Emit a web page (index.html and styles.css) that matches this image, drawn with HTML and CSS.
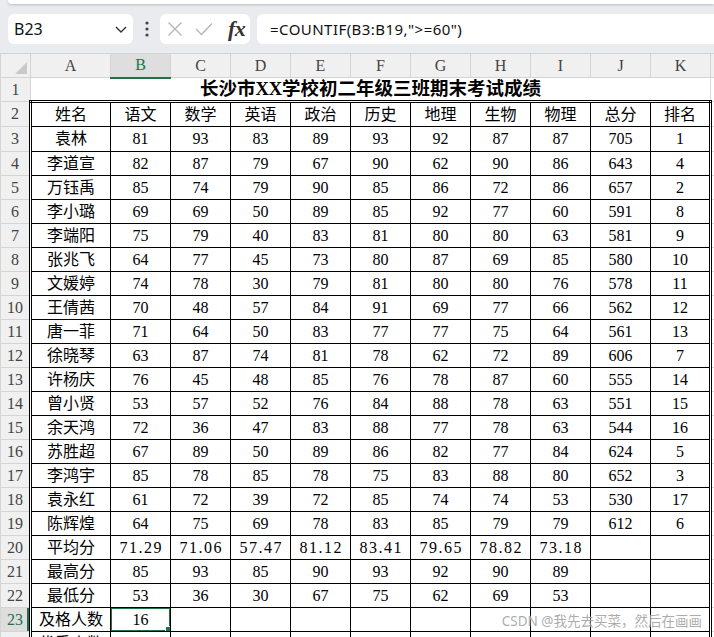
FILE: index.html
```html
<!DOCTYPE html>
<html lang="zh-CN">
<head>
<meta charset="utf-8">
<title>成绩表</title>
<link rel="stylesheet" href="styles.css">
</head>
<body>
<div class="app">
  <div class="ribbon"></div>
  <div class="fbar">
    <div class="namebox">
      <span>B23</span>
      <svg class="chev" width="12" height="7" viewBox="0 0 12 7"><polyline points="1,1 6,6 11,1" fill="none" stroke="#333" stroke-width="1.4"/></svg>
    </div>
    <div class="dots">
      <svg width="4" height="16" viewBox="0 0 4 16"><circle cx="2" cy="2" r="1.6" fill="#444"/><circle cx="2" cy="8" r="1.6" fill="#444"/><circle cx="2" cy="14" r="1.6" fill="#444"/></svg>
    </div>
    <div class="fxbox">
      <svg width="16" height="16" viewBox="0 0 16 16"><path d="M1.5 1.5 L14.5 14.5 M14.5 1.5 L1.5 14.5" stroke="#b4b4b4" stroke-width="1.3" fill="none"/></svg>
      <svg class="check" width="18" height="14" viewBox="0 0 18 14"><polyline points="1,7 6.5,12.5 17,1.5" fill="none" stroke="#b4b4b4" stroke-width="1.3"/></svg>
      <span class="fx">fx</span>
    </div>
    <div class="formula">=COUNTIF(B3:B19,"&gt;=60")</div>
  </div>
  <div class="sheet">
    <table class="grid">
      <colgroup>
        <col class="c-rh"><col class="c-a">
        <col class="c-n"><col class="c-n"><col class="c-n"><col class="c-n"><col class="c-n">
        <col class="c-n"><col class="c-n"><col class="c-n"><col class="c-n"><col class="c-n">
        <col class="c-x">
      </colgroup>
      <tr class="hdr">
        <th class="corner"><svg width="12" height="12" viewBox="0 0 12 12"><polygon points="12,0 12,12 0,12" fill="#c9c9c9"/></svg></th>
        <th>A</th><th class="hsel">B</th><th>C</th><th>D</th><th>E</th><th>F</th><th>G</th><th>H</th><th>I</th><th>J</th><th>K</th><th></th>
      </tr>
      <tr class="r">
        <td class="rh">1</td>
        <td class="title" colspan="11">长沙市XX学校初二年级三班期末考试成绩</td>
        <td class="gc"></td>
      </tr>
      <tr class="r r2 data top">
        <td class="rh">2</td>
        <td>姓名</td><td>语文</td><td>数学</td><td>英语</td><td>政治</td><td>历史</td><td>地理</td><td>生物</td><td>物理</td><td>总分</td><td>排名</td><td class="gc"></td>
      </tr>
      <tr class="r r2 data">
        <td class="rh">3</td>
        <td>袁林</td><td>81</td><td>93</td><td>83</td><td>89</td><td>93</td><td>92</td><td>87</td><td>87</td><td>705</td><td>1</td><td class="gc"></td>
      </tr>
      <tr class="r data">
        <td class="rh">4</td>
        <td>李道宣</td><td>82</td><td>87</td><td>79</td><td>67</td><td>90</td><td>62</td><td>90</td><td>86</td><td>643</td><td>4</td><td class="gc"></td>
      </tr>
      <tr class="r data">
        <td class="rh">5</td>
        <td>万钰禹</td><td>85</td><td>74</td><td>79</td><td>90</td><td>85</td><td>86</td><td>72</td><td>86</td><td>657</td><td>2</td><td class="gc"></td>
      </tr>
      <tr class="r data">
        <td class="rh">6</td>
        <td>李小璐</td><td>69</td><td>69</td><td>50</td><td>89</td><td>85</td><td>92</td><td>77</td><td>60</td><td>591</td><td>8</td><td class="gc"></td>
      </tr>
      <tr class="r data">
        <td class="rh">7</td>
        <td>李端阳</td><td>75</td><td>79</td><td>40</td><td>83</td><td>81</td><td>80</td><td>80</td><td>63</td><td>581</td><td>9</td><td class="gc"></td>
      </tr>
      <tr class="r data">
        <td class="rh">8</td>
        <td>张兆飞</td><td>64</td><td>77</td><td>45</td><td>73</td><td>80</td><td>87</td><td>69</td><td>85</td><td>580</td><td>10</td><td class="gc"></td>
      </tr>
      <tr class="r data">
        <td class="rh">9</td>
        <td>文媛婷</td><td>74</td><td>78</td><td>30</td><td>79</td><td>81</td><td>80</td><td>80</td><td>76</td><td>578</td><td>11</td><td class="gc"></td>
      </tr>
      <tr class="r data">
        <td class="rh">10</td>
        <td>王倩茜</td><td>70</td><td>48</td><td>57</td><td>84</td><td>91</td><td>69</td><td>77</td><td>66</td><td>562</td><td>12</td><td class="gc"></td>
      </tr>
      <tr class="r data">
        <td class="rh">11</td>
        <td>唐一菲</td><td>71</td><td>64</td><td>50</td><td>83</td><td>77</td><td>77</td><td>75</td><td>64</td><td>561</td><td>13</td><td class="gc"></td>
      </tr>
      <tr class="r data">
        <td class="rh">12</td>
        <td>徐晓琴</td><td>63</td><td>87</td><td>74</td><td>81</td><td>78</td><td>62</td><td>72</td><td>89</td><td>606</td><td>7</td><td class="gc"></td>
      </tr>
      <tr class="r data">
        <td class="rh">13</td>
        <td>许杨庆</td><td>76</td><td>45</td><td>48</td><td>85</td><td>76</td><td>78</td><td>87</td><td>60</td><td>555</td><td>14</td><td class="gc"></td>
      </tr>
      <tr class="r data">
        <td class="rh">14</td>
        <td>曾小贤</td><td>53</td><td>57</td><td>52</td><td>76</td><td>84</td><td>88</td><td>78</td><td>63</td><td>551</td><td>15</td><td class="gc"></td>
      </tr>
      <tr class="r data">
        <td class="rh">15</td>
        <td>余天鸿</td><td>72</td><td>36</td><td>47</td><td>83</td><td>88</td><td>77</td><td>78</td><td>63</td><td>544</td><td>16</td><td class="gc"></td>
      </tr>
      <tr class="r data">
        <td class="rh">16</td>
        <td>苏胜超</td><td>67</td><td>89</td><td>50</td><td>89</td><td>86</td><td>82</td><td>77</td><td>84</td><td>624</td><td>5</td><td class="gc"></td>
      </tr>
      <tr class="r data">
        <td class="rh">17</td>
        <td>李鸿宇</td><td>85</td><td>78</td><td>85</td><td>78</td><td>75</td><td>83</td><td>88</td><td>80</td><td>652</td><td>3</td><td class="gc"></td>
      </tr>
      <tr class="r data">
        <td class="rh">18</td>
        <td>袁永红</td><td>61</td><td>72</td><td>39</td><td>72</td><td>85</td><td>74</td><td>74</td><td>53</td><td>530</td><td>17</td><td class="gc"></td>
      </tr>
      <tr class="r data">
        <td class="rh">19</td>
        <td>陈辉煌</td><td>64</td><td>75</td><td>69</td><td>78</td><td>83</td><td>85</td><td>79</td><td>79</td><td>612</td><td>6</td><td class="gc"></td>
      </tr>
      <tr class="r data avg">
        <td class="rh">20</td>
        <td>平均分</td><td>71.29</td><td>71.06</td><td>57.47</td><td>81.12</td><td>83.41</td><td>79.65</td><td>78.82</td><td>73.18</td><td></td><td></td><td class="gc"></td>
      </tr>
      <tr class="r data">
        <td class="rh">21</td>
        <td>最高分</td><td>85</td><td>93</td><td>85</td><td>90</td><td>93</td><td>92</td><td>90</td><td>89</td><td></td><td></td><td class="gc"></td>
      </tr>
      <tr class="r data">
        <td class="rh">22</td>
        <td>最低分</td><td>53</td><td>36</td><td>30</td><td>67</td><td>75</td><td>62</td><td>69</td><td>53</td><td></td><td></td><td class="gc"></td>
      </tr>
      <tr class="r data">
        <td class="rh rsel">23</td>
        <td>及格人数</td><td class="sel">16</td><td></td><td></td><td></td><td></td><td></td><td></td><td></td><td></td><td></td><td class="gc"></td>
      </tr>
      <tr class="r data">
        <td class="rh">24</td>
        <td>优秀人数</td><td></td><td></td><td></td><td></td><td></td><td></td><td></td><td></td><td></td><td></td><td class="gc"></td>
      </tr>
    </table>
  </div>
  <div class="watermark">CSDN @我先去买菜，然后在画画</div>
</div>
</body>
</html>
```
FILE: styles.css
```css
* { box-sizing: border-box; }
html, body { margin: 0; padding: 0; }
body { background: #e9ebee; font-family: "Noto Sans", "Liberation Sans", sans-serif; }

.app {
  width: 714px;
  height: 637px;
  overflow: hidden;
  position: relative;
  background: #e9ebee;
}

.ribbon {
  height: 4px;
  margin-left: 8px;
  background: #fff;
  border-bottom-left-radius: 7px;
  box-shadow: 0 1px 3px rgba(0, 0, 0, 0.2);
}

.fbar {
  display: flex;
  align-items: center;
  height: 30px;
  margin-top: 10px;
  padding-left: 8px;
}

.namebox {
  width: 125px;
  height: 30px;
  background: #fff;
  border-radius: 6px;
  display: flex;
  align-items: center;
  justify-content: space-between;
  padding: 0 6px 0 6px;
  font-size: 16px;
  color: #111;
}

.dots {
  width: 27px;
  display: flex;
  justify-content: center;
  align-items: center;
}

.fxbox {
  width: 90px;
  height: 30px;
  background: #fff;
  border-radius: 6px;
  display: flex;
  align-items: center;
  padding-left: 7px;
}

.check { margin-left: 12px; }

.fx {
  margin-left: 15px;
  font-family: "Liberation Serif", serif;
  font-style: italic;
  font-weight: bold;
  font-size: 22px;
  color: #333;
  line-height: 1;
  letter-spacing: -0.5px;
}

.formula {
  flex: 1;
  height: 30px;
  margin-left: 7px;
  margin-right: -8px;
  background: #fff;
  border-radius: 6px 0 0 6px;
  padding-left: 13px;
  display: flex;
  align-items: center;
  font-size: 15px;
  letter-spacing: 0.45px;
  color: #111;
}

.sheet { margin-top: 9px; }

table.grid {
  border-collapse: collapse;
  table-layout: fixed;
  width: 734px;
  background: #fff;
  font-family: "Liberation Serif", "Noto Sans CJK SC", serif;
  font-size: 16px;
  color: #000;
}

.c-rh { width: 30px; }
.c-a { width: 80px; }
.c-n { width: 60px; }
.c-x { width: 24px; }

.grid th, .grid td {
  padding: 0;
  text-align: center;
  vertical-align: middle;
  white-space: nowrap;
  overflow: hidden;
  line-height: 20px;
  border: 1px solid #dadada;
}

.hdr { height: 24px; }
.hdr th {
  background: #f0f0f0;
  border-color: #d4d4d4;
  font-weight: normal;
  font-size: 16px;
  color: #444;
}
.hdr th.hsel {
  background: #dedede;
  color: #217346;
  border-bottom: 2px solid #217346;
}
.corner { position: relative; }
.corner svg { position: absolute; right: 3px; bottom: 3px; }

.r { height: 24px; }
.r2 { height: 25px; }

.rh {
  background: #f0f0f0;
  border-color: #d4d4d4 !important;
  color: #444;
  font-size: 16px;
}
.rh.rsel {
  background: #dedede;
  color: #217346;
  box-shadow: inset -2px 0 0 #217346;
}

.title {
  font-weight: bold;
  font-size: 18.5px;
}

.data td { border: 1px solid #000; }
.data td:nth-child(2) { border-left: 3px double #000; }
.data td:nth-child(12) { border-right: 3px double #000; }
.data td.gc { border-color: #dadada; }
.data td.rh { border-color: #d4d4d4; }
.top td:not(.rh):not(.gc) { border-top: 3px double #000; }

.avg td:not(:first-child):not(:nth-child(2)) { letter-spacing: 1.5px; padding-left: 1.5px; }

.sel { position: relative; }
.sel::after {
  content: "";
  position: absolute;
  left: -1px;
  top: -1px;
  right: -1px;
  bottom: -1px;
  border: 2px solid #217346;
}
.sel::before {
  content: "";
  position: absolute;
  right: -4px;
  bottom: -4px;
  width: 7px;
  height: 7px;
  background: #217346;
  border: 1px solid #fff;
  z-index: 2;
}

.watermark {
  position: absolute;
  right: 12px;
  bottom: 7px;
  font-family: "Noto Sans", "Noto Sans CJK SC", sans-serif;
  font-size: 13.5px;
  color: rgba(150, 150, 150, 0.8);
  text-shadow: 0 0 2px #fff;
}
```
